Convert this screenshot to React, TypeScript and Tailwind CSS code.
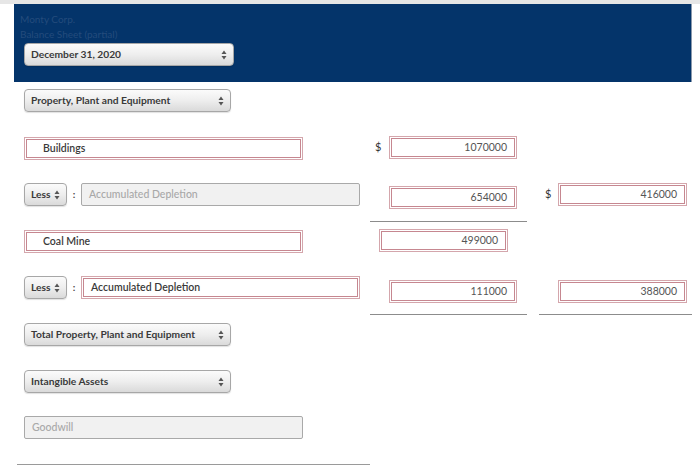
import React from "react";

const font = { fontFamily: "Lato, 'Open Sans', 'Liberation Sans', sans-serif" };

function Arrows() {
  return (
    <svg width="6" height="10" viewBox="0 0 6 10" className="shrink-0">
      <path d="M3 0.5 L5.5 4 L0.5 4 Z" fill="#555" />
      <path d="M3 9.5 L5.5 6 L0.5 6 Z" fill="#555" />
    </svg>
  );
}

function Select({ label, w }: { label: string; w: string }) {
  return (
    <div
      className={`${w} h-[23px] shrink-0 flex items-center justify-between pl-[6px] pr-[6px] rounded-[4px] border border-[#a7a7a7] bg-gradient-to-b from-[#fbfbfb] via-[#eeeeee] to-[#dadada] shadow-[0_1px_1px_rgba(0,0,0,0.12)] text-[10.25px] font-bold text-[#3a3a3a]`}
    >
      <span>{label}</span>
      <Arrows />
    </div>
  );
}

function RedInput({
  text,
  w,
  right,
  pl,
}: {
  text: string;
  w: string;
  right?: boolean;
  pl?: string;
}) {
  return (
    <div
      className={`${w} h-[23px] shrink-0 flex items-center border border-[#d4a6ac] shadow-[inset_0_0_0_1px_#ffffff,inset_0_0_0_2px_#c68790] bg-white text-[10.5px] ${
        right ? "justify-end pr-[9px] text-[#555] font-normal" : `${pl ?? "pl-[18px]"} text-[#3a3a3a] font-semibold`
      }`}
    >
      {text}
    </div>
  );
}

function Disabled({ text, w }: { text: string; w: string }) {
  return (
    <div
      className={`${w} h-[23px] shrink-0 flex items-center pl-[7px] border border-[#a9a9a9] rounded-[2px] bg-[#f1f1f1] text-[10.5px] text-[#a8a8a8] font-medium`}
    >
      {text}
    </div>
  );
}

function Dollar({ pl }: { pl: string }) {
  return (
    <div className={`w-[19px] h-[21px] flex items-center ${pl}`}>
      <span className="text-[11px] text-[#333] leading-none">$</span>
    </div>
  );
}

export default function App() {
  return (
    <div className="w-[700px] h-[466px] overflow-hidden bg-white relative" style={font}>
      <div className="h-[4px] bg-[#e6e6e6]" />
      <div className="ml-[14px] w-[678px] h-[78px] bg-[#04346a] border-r border-[#8a99ad] pt-[8px]">
        <div className="pl-[6px] text-[10px] leading-[15px] text-[#234b7c]">Monty Corp.</div>
        <div className="pl-[6px] text-[10px] leading-[15px] text-[#234b7c]">Balance Sheet (partial)</div>
        <div className="ml-[10px] mt-[1px]">
          <Select label="December 31, 2020" w="w-[210px]" />
        </div>
      </div>

      <div className="pl-[24px]">
        {/* PPE */}
        <div className="mt-[7px] h-[23px]">
          <Select label="Property, Plant and Equipment" w="w-[207px]" />
        </div>

        {/* Buildings */}
        <div className="mt-[24px] h-[24px] flex items-start">
          <div className="w-[346px] pt-[1px]">
            <RedInput text="Buildings" w="w-[279px]" />
          </div>
          <div className="w-[157px] flex items-start">
            <Dollar pl="pl-[5px]" />
            <RedInput text="1070000" w="w-[128px]" right />
          </div>
        </div>

        {/* Less accumulated (disabled) */}
        <div className="mt-[23px] h-[27px] flex items-start">
          <div className="w-[346px] flex items-center">
            <Select label="Less" w="w-[43px]" />
            <span className="w-[14px] text-center text-[10px] font-bold text-[#444]">:</span>
            <Disabled text="Accumulated Depletion" w="w-[279px]" />
          </div>
          <div className="w-[157px] pl-[19px] pt-[3px]">
            <RedInput text="654000" w="w-[128px]" right />
          </div>
          <div className="ml-[12px] flex items-start">
            <Dollar pl="pl-[6px]" />
            <RedInput text="416000" w="w-[129px]" right />
          </div>
        </div>

        {/* line */}
        <div className="mt-[11px] flex">
          <div className="w-[346px]" />
          <div className="w-[157px] h-[1px] bg-[#8c8c8c]" />
        </div>

        {/* Coal Mine */}
        <div className="mt-[7px] h-[24px] flex items-start">
          <div className="w-[346px] pt-[1px]">
            <RedInput text="Coal Mine" w="w-[279px]" />
          </div>
          <div className="w-[157px] pl-[9px]">
            <RedInput text="499000" w="w-[129px]" right />
          </div>
        </div>

        {/* Less accumulated (active) */}
        <div className="mt-[23px] h-[27px] flex items-start">
          <div className="w-[346px] flex items-center">
            <Select label="Less" w="w-[43px]" />
            <span className="w-[14px] text-center text-[10px] font-bold text-[#444]">:</span>
            <RedInput text="Accumulated Depletion" w="w-[279px]" pl="pl-[9px]" />
          </div>
          <div className="w-[157px] pl-[19px] pt-[4px]">
            <RedInput text="111000" w="w-[128px]" right />
          </div>
          <div className="ml-[12px] pl-[19px] pt-[4px]">
            <RedInput text="388000" w="w-[129px]" right />
          </div>
        </div>

        {/* lines */}
        <div className="mt-[11px] flex">
          <div className="w-[346px]" />
          <div className="w-[157px] h-[1px] bg-[#8c8c8c]" />
          <div className="ml-[12px] w-[153px] h-[1px] bg-[#8c8c8c]" />
        </div>

        {/* Total PPE */}
        <div className="mt-[8px] h-[23px]">
          <Select label="Total Property, Plant and Equipment" w="w-[207px]" />
        </div>

        {/* Intangible */}
        <div className="mt-[24px] h-[23px]">
          <Select label="Intangible Assets" w="w-[207px]" />
        </div>

        {/* Goodwill */}
        <div className="mt-[23px] h-[24px]">
          <Disabled text="Goodwill" w="w-[279px]" />
        </div>
      </div>

      <div className="mt-[24px] ml-[17px] w-[353px] h-[1px] bg-[#9a9a9a]" />
    </div>
  );
}
